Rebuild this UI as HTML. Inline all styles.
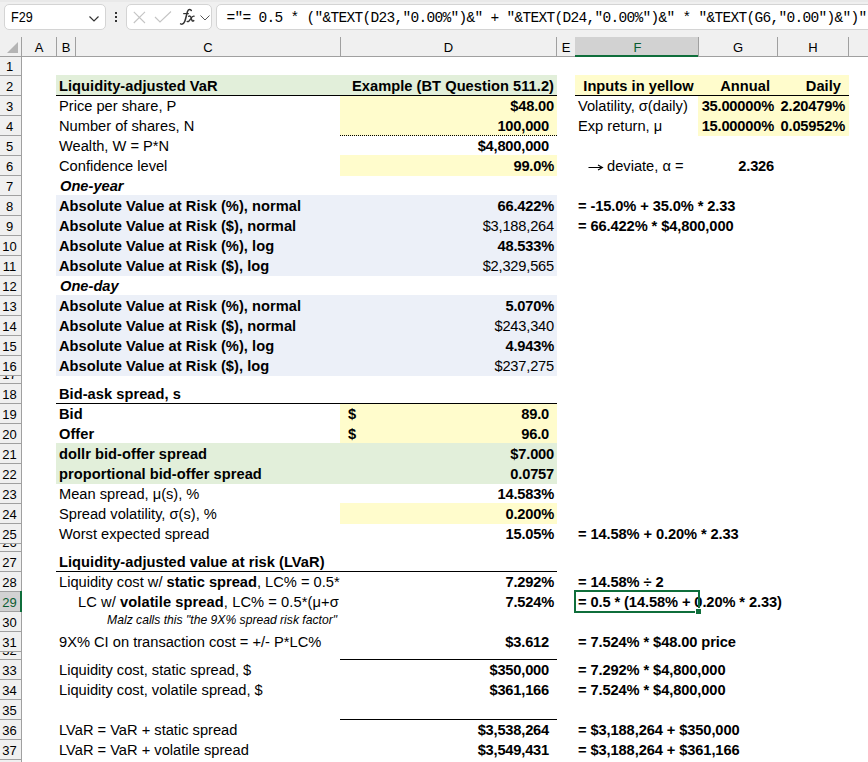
<!DOCTYPE html>
<html><head><meta charset="utf-8"><style>
*{margin:0;padding:0;box-sizing:border-box}
html,body{width:868px;height:762px;overflow:hidden;background:#fff;position:relative}
body{font-family:"Liberation Sans",sans-serif;}
.f{position:absolute}
.t{position:absolute;height:20px;line-height:20px;font-size:14.67px;white-space:nowrap;color:#000}
.b{font-weight:bold;letter-spacing:0.03px}
.n{letter-spacing:-0.2px}
.fm{letter-spacing:-0.1px}
.ls{letter-spacing:0.08px}
.bi{font-weight:bold;font-style:italic}
.sm{font-style:italic;font-size:12.15px}
#tb{position:absolute;left:0;top:0;width:868px;height:37px;background:#f0f0f0}
.box{position:absolute;top:4px;height:26px;background:#fff;border:1px solid #d4d4d4;border-radius:5px}
.ch{position:absolute;top:38px;height:18px;line-height:19px;text-align:center;font-size:13px;color:#000;background:#f0f0f0}
.rh{position:absolute;left:0;width:21px;overflow:hidden;background:#f0f0f0;font-size:13px;color:#000}
.rh.sel{background:#d2d2d2;color:#0b5c30}
</style></head><body>
<div id="tb">
 <div style="position:absolute;left:0;top:0;width:868px;height:2px;background:#e9e9e9"></div>
 <div class="box" style="left:4px;width:102px"><span style="position:absolute;left:6px;top:0;line-height:25px;font-size:14.5px;color:#000;transform:scaleX(0.87);transform-origin:0 0">F29</span>
  <svg style="position:absolute;left:84px;top:11px" width="10" height="6" viewBox="0 0 10 6"><path d="M0.5 0.5 L5 5 L9.5 0.5" fill="none" stroke="#333" stroke-width="1.2"/></svg></div>
 <div style="position:absolute;left:115px;top:12px;width:2px;height:2px;background:#333"></div>
 <div style="position:absolute;left:115px;top:16px;width:2px;height:2px;background:#333"></div>
 <div style="position:absolute;left:115px;top:20px;width:2px;height:2px;background:#333"></div>
 <div class="box" style="left:126px;width:86px">
  <svg style="position:absolute;left:6px;top:6px" width="14" height="14" viewBox="0 0 14 14"><path d="M0.8 0.8 L12 12 M12 0.8 L0.8 12" stroke="#c4c4c4" stroke-width="1.1"/></svg>
  <svg style="position:absolute;left:27px;top:5px" width="18" height="14" viewBox="0 0 18 14"><path d="M1 7 L6 12 L17 1.5" fill="none" stroke="#c4c4c4" stroke-width="1.1"/></svg>
  <svg style="position:absolute;left:49px;top:1px" width="24" height="22" viewBox="0 0 24 22"><path d="M15.3 4.6 C14.8 3.2 12.6 2.9 11.6 5.2 C10.8 7.2 9.9 12.5 8.7 15.6 C7.9 17.6 6.4 18.6 4.6 17.9" fill="none" stroke="#333" stroke-width="1.5" stroke-linecap="round"/><path d="M7.2 7.6 L12.8 7.6" stroke="#333" stroke-width="1.2"/><path d="M12.6 10.3 C14.2 9.6 14.9 10.6 15.3 12.4 C15.8 14.6 16.3 15.8 17.8 14.6 M18 10.2 C17.2 9.8 16.3 10.4 14.6 12.8 C13.2 14.9 12.4 16.2 11.2 15.4" fill="none" stroke="#333" stroke-width="1.4" stroke-linecap="round"/></svg>
  <svg style="position:absolute;left:73px;top:10px" width="10" height="6" viewBox="0 0 10 6"><path d="M0.5 0.5 L5 5 L9.5 0.5" fill="none" stroke="#555" stroke-width="1"/></svg>
 </div>
 <div class="box" style="left:216px;width:700px"><span style="position:absolute;left:9.5px;top:1px;line-height:24px;font-family:'Liberation Mono',monospace;font-size:14.5px;letter-spacing:-0.7px;color:#000;white-space:nowrap">="= 0.5 * ("&amp;TEXT(D23,"0.00%")&amp;" + "&amp;TEXT(D24,"0.00%")&amp;" * "&amp;TEXT(G6,"0.00")&amp;")"</span></div>
</div>
<div class="f" style="left:0;top:37px;width:868px;height:19px;background:#f0f0f0"></div>
<svg class="f" style="left:0;top:37px" width="21" height="19"><path d="M7 16 L18 16 L18 5 Z" fill="#b4b4b4"/></svg>
<div class="ch" style="left:22px;width:34px;">A</div><div class="f" style="left:56px;top:37px;width:1px;height:19px;background:#a0a0a0"></div><div class="ch" style="left:57px;width:18px;">B</div><div class="f" style="left:75px;top:37px;width:1px;height:19px;background:#a0a0a0"></div><div class="ch" style="left:76px;width:264px;">C</div><div class="f" style="left:340px;top:37px;width:1px;height:19px;background:#a0a0a0"></div><div class="ch" style="left:341px;width:215px;">D</div><div class="f" style="left:556px;top:37px;width:1px;height:19px;background:#a0a0a0"></div><div class="ch" style="left:557px;width:18px;">E</div><div class="f" style="left:575px;top:37px;width:1px;height:19px;background:#a0a0a0"></div><div class="ch" style="left:576px;width:122px;background:#d2d2d2;">F</div><div class="f" style="left:698px;top:37px;width:1px;height:19px;background:#a0a0a0"></div><div class="ch" style="left:699px;width:78px;">G</div><div class="f" style="left:777px;top:37px;width:1px;height:19px;background:#a0a0a0"></div><div class="ch" style="left:778px;width:70px;">H</div><div class="f" style="left:848px;top:37px;width:1px;height:19px;background:#a0a0a0"></div><div class="f" style="left:575px;top:37px;width:123px;height:19px;background:#d2d2d2;text-align:center;line-height:21px;font-size:13px;color:#0b5c30;padding-left:2px">F</div>
<div class="f" style="left:0;top:56px;width:868px;height:1px;background:#a0a0a0"></div>
<div class="f" style="left:575px;top:55px;width:123px;height:2px;background:#0f6e3b"></div>
<div class="f" style="left:21px;top:37px;width:1px;height:725px;background:#a0a0a0"></div>
<div class="rh" style="top:57px;height:18px"><span style="position:absolute;left:0px;width:19px;bottom:0px;height:20px;line-height:20px;padding-top:2px;text-align:center">1</span></div><div class="f" style="left:0;top:75px;width:21px;height:1px;background:#a0a0a0"></div><div class="rh" style="top:76px;height:19px"><span style="position:absolute;left:0px;width:19px;bottom:0px;height:20px;line-height:20px;padding-top:2px;text-align:center">2</span></div><div class="f" style="left:0;top:95px;width:21px;height:1px;background:#a0a0a0"></div><div class="rh" style="top:96px;height:19px"><span style="position:absolute;left:0px;width:19px;bottom:0px;height:20px;line-height:20px;padding-top:2px;text-align:center">3</span></div><div class="f" style="left:0;top:115px;width:21px;height:1px;background:#a0a0a0"></div><div class="rh" style="top:116px;height:19px"><span style="position:absolute;left:0px;width:19px;bottom:0px;height:20px;line-height:20px;padding-top:2px;text-align:center">4</span></div><div class="f" style="left:0;top:135px;width:21px;height:1px;background:#a0a0a0"></div><div class="rh" style="top:136px;height:19px"><span style="position:absolute;left:0px;width:19px;bottom:0px;height:20px;line-height:20px;padding-top:2px;text-align:center">5</span></div><div class="f" style="left:0;top:155px;width:21px;height:1px;background:#a0a0a0"></div><div class="rh" style="top:156px;height:19px"><span style="position:absolute;left:0px;width:19px;bottom:0px;height:20px;line-height:20px;padding-top:2px;text-align:center">6</span></div><div class="f" style="left:0;top:175px;width:21px;height:1px;background:#a0a0a0"></div><div class="rh" style="top:176px;height:19px"><span style="position:absolute;left:0px;width:19px;bottom:0px;height:20px;line-height:20px;padding-top:2px;text-align:center">7</span></div><div class="f" style="left:0;top:195px;width:21px;height:1px;background:#a0a0a0"></div><div class="rh" style="top:196px;height:19px"><span style="position:absolute;left:0px;width:19px;bottom:0px;height:20px;line-height:20px;padding-top:2px;text-align:center">8</span></div><div class="f" style="left:0;top:215px;width:21px;height:1px;background:#a0a0a0"></div><div class="rh" style="top:216px;height:19px"><span style="position:absolute;left:0px;width:19px;bottom:0px;height:20px;line-height:20px;padding-top:2px;text-align:center">9</span></div><div class="f" style="left:0;top:235px;width:21px;height:1px;background:#a0a0a0"></div><div class="rh" style="top:236px;height:19px"><span style="position:absolute;left:0px;width:19px;bottom:0px;height:20px;line-height:20px;padding-top:2px;text-align:center">10</span></div><div class="f" style="left:0;top:255px;width:21px;height:1px;background:#a0a0a0"></div><div class="rh" style="top:256px;height:19px"><span style="position:absolute;left:0px;width:19px;bottom:0px;height:20px;line-height:20px;padding-top:2px;text-align:center">11</span></div><div class="f" style="left:0;top:275px;width:21px;height:1px;background:#a0a0a0"></div><div class="rh" style="top:276px;height:19px"><span style="position:absolute;left:0px;width:19px;bottom:0px;height:20px;line-height:20px;padding-top:2px;text-align:center">12</span></div><div class="f" style="left:0;top:295px;width:21px;height:1px;background:#a0a0a0"></div><div class="rh" style="top:296px;height:19px"><span style="position:absolute;left:0px;width:19px;bottom:0px;height:20px;line-height:20px;padding-top:2px;text-align:center">13</span></div><div class="f" style="left:0;top:315px;width:21px;height:1px;background:#a0a0a0"></div><div class="rh" style="top:316px;height:19px"><span style="position:absolute;left:0px;width:19px;bottom:0px;height:20px;line-height:20px;padding-top:2px;text-align:center">14</span></div><div class="f" style="left:0;top:335px;width:21px;height:1px;background:#a0a0a0"></div><div class="rh" style="top:336px;height:19px"><span style="position:absolute;left:0px;width:19px;bottom:0px;height:20px;line-height:20px;padding-top:2px;text-align:center">15</span></div><div class="f" style="left:0;top:355px;width:21px;height:1px;background:#a0a0a0"></div><div class="rh" style="top:356px;height:19px"><span style="position:absolute;left:0px;width:19px;bottom:0px;height:20px;line-height:20px;padding-top:2px;text-align:center">16</span></div><div class="f" style="left:0;top:375px;width:21px;height:1px;background:#a0a0a0"></div><div class="rh" style="top:376px;height:7px"><span style="position:absolute;left:0px;width:19px;bottom:0px;height:20px;line-height:20px;padding-top:2px;text-align:center">17</span></div><div class="f" style="left:0;top:383px;width:21px;height:1px;background:#a0a0a0"></div><div class="rh" style="top:384px;height:19px"><span style="position:absolute;left:0px;width:19px;bottom:0px;height:20px;line-height:20px;padding-top:2px;text-align:center">18</span></div><div class="f" style="left:0;top:403px;width:21px;height:1px;background:#a0a0a0"></div><div class="rh" style="top:404px;height:19px"><span style="position:absolute;left:0px;width:19px;bottom:0px;height:20px;line-height:20px;padding-top:2px;text-align:center">19</span></div><div class="f" style="left:0;top:423px;width:21px;height:1px;background:#a0a0a0"></div><div class="rh" style="top:424px;height:19px"><span style="position:absolute;left:0px;width:19px;bottom:0px;height:20px;line-height:20px;padding-top:2px;text-align:center">20</span></div><div class="f" style="left:0;top:443px;width:21px;height:1px;background:#a0a0a0"></div><div class="rh" style="top:444px;height:19px"><span style="position:absolute;left:0px;width:19px;bottom:0px;height:20px;line-height:20px;padding-top:2px;text-align:center">21</span></div><div class="f" style="left:0;top:463px;width:21px;height:1px;background:#a0a0a0"></div><div class="rh" style="top:464px;height:19px"><span style="position:absolute;left:0px;width:19px;bottom:0px;height:20px;line-height:20px;padding-top:2px;text-align:center">22</span></div><div class="f" style="left:0;top:483px;width:21px;height:1px;background:#a0a0a0"></div><div class="rh" style="top:484px;height:19px"><span style="position:absolute;left:0px;width:19px;bottom:0px;height:20px;line-height:20px;padding-top:2px;text-align:center">23</span></div><div class="f" style="left:0;top:503px;width:21px;height:1px;background:#a0a0a0"></div><div class="rh" style="top:504px;height:19px"><span style="position:absolute;left:0px;width:19px;bottom:0px;height:20px;line-height:20px;padding-top:2px;text-align:center">24</span></div><div class="f" style="left:0;top:523px;width:21px;height:1px;background:#a0a0a0"></div><div class="rh" style="top:524px;height:19px"><span style="position:absolute;left:0px;width:19px;bottom:0px;height:20px;line-height:20px;padding-top:2px;text-align:center">25</span></div><div class="f" style="left:0;top:543px;width:21px;height:1px;background:#a0a0a0"></div><div class="rh" style="top:544px;height:7px"><span style="position:absolute;left:0px;width:19px;bottom:0px;height:20px;line-height:20px;padding-top:2px;text-align:center">26</span></div><div class="f" style="left:0;top:551px;width:21px;height:1px;background:#a0a0a0"></div><div class="rh" style="top:552px;height:19px"><span style="position:absolute;left:0px;width:19px;bottom:0px;height:20px;line-height:20px;padding-top:2px;text-align:center">27</span></div><div class="f" style="left:0;top:571px;width:21px;height:1px;background:#a0a0a0"></div><div class="rh" style="top:572px;height:19px"><span style="position:absolute;left:0px;width:19px;bottom:0px;height:20px;line-height:20px;padding-top:2px;text-align:center">28</span></div><div class="f" style="left:0;top:591px;width:21px;height:1px;background:#a0a0a0"></div><div class="rh sel" style="top:592px;height:19px"><span style="position:absolute;left:0px;width:19px;bottom:0px;height:20px;line-height:20px;padding-top:2px;text-align:center">29</span></div><div class="f" style="left:0;top:611px;width:21px;height:1px;background:#a0a0a0"></div><div class="rh" style="top:612px;height:19px"><span style="position:absolute;left:0px;width:19px;bottom:0px;height:20px;line-height:20px;padding-top:2px;text-align:center">30</span></div><div class="f" style="left:0;top:631px;width:21px;height:1px;background:#a0a0a0"></div><div class="rh" style="top:632px;height:19px"><span style="position:absolute;left:0px;width:19px;bottom:0px;height:20px;line-height:20px;padding-top:2px;text-align:center">31</span></div><div class="f" style="left:0;top:651px;width:21px;height:1px;background:#a0a0a0"></div><div class="rh" style="top:652px;height:7px"><span style="position:absolute;left:0px;width:19px;bottom:0px;height:20px;line-height:20px;padding-top:2px;text-align:center">32</span></div><div class="f" style="left:0;top:659px;width:21px;height:1px;background:#a0a0a0"></div><div class="rh" style="top:660px;height:19px"><span style="position:absolute;left:0px;width:19px;bottom:0px;height:20px;line-height:20px;padding-top:2px;text-align:center">33</span></div><div class="f" style="left:0;top:679px;width:21px;height:1px;background:#a0a0a0"></div><div class="rh" style="top:680px;height:19px"><span style="position:absolute;left:0px;width:19px;bottom:0px;height:20px;line-height:20px;padding-top:2px;text-align:center">34</span></div><div class="f" style="left:0;top:699px;width:21px;height:1px;background:#a0a0a0"></div><div class="rh" style="top:700px;height:19px"><span style="position:absolute;left:0px;width:19px;bottom:0px;height:20px;line-height:20px;padding-top:2px;text-align:center">35</span></div><div class="f" style="left:0;top:719px;width:21px;height:1px;background:#a0a0a0"></div><div class="rh" style="top:720px;height:19px"><span style="position:absolute;left:0px;width:19px;bottom:0px;height:20px;line-height:20px;padding-top:2px;text-align:center">36</span></div><div class="f" style="left:0;top:739px;width:21px;height:1px;background:#a0a0a0"></div><div class="rh" style="top:740px;height:19px"><span style="position:absolute;left:0px;width:19px;bottom:0px;height:20px;line-height:20px;padding-top:2px;text-align:center">37</span></div><div class="f" style="left:0;top:759px;width:21px;height:1px;background:#a0a0a0"></div><div class="rh" style="top:760px;height:19px"><span style="position:absolute;left:0px;width:19px;bottom:0px;height:20px;line-height:20px;padding-top:2px;text-align:center">38</span></div><div class="f" style="left:0;top:779px;width:21px;height:1px;background:#a0a0a0"></div>
<div class="f" style="left:20px;top:591px;width:2px;height:21px;background:#0f6e3b"></div>
<div class="f" style="left:56px;top:75px;width:501px;height:21px;background:#e2efda"></div><div class="f" style="left:575px;top:75px;width:274px;height:21px;background:#fffccc"></div><div class="f" style="left:340px;top:95px;width:217px;height:41px;background:#fffccc"></div><div class="f" style="left:698px;top:95px;width:151px;height:41px;background:#fffccc"></div><div class="f" style="left:340px;top:155px;width:217px;height:21px;background:#fffccc"></div><div class="f" style="left:56px;top:195px;width:501px;height:81px;background:#ecf0f8"></div><div class="f" style="left:56px;top:295px;width:501px;height:81px;background:#ecf0f8"></div><div class="f" style="left:340px;top:403px;width:217px;height:41px;background:#fffccc"></div><div class="f" style="left:56px;top:443px;width:501px;height:41px;background:#e2efda"></div><div class="f" style="left:340px;top:503px;width:217px;height:21px;background:#fffccc"></div><div class="f" style="left:56px;top:95px;width:501px;height:1px;background:#000"></div><div class="f" style="left:575px;top:95px;width:274px;height:1px;background:#000"></div><div class="f" style="left:340px;top:135px;width:217px;height:0;border-top:1px dotted #000"></div><div class="f" style="left:56px;top:403px;width:501px;height:1px;background:#000"></div><div class="f" style="left:56px;top:571px;width:501px;height:1px;background:#000"></div><div class="f" style="left:340px;top:659px;width:217px;height:1px;background:#000"></div><div class="f" style="left:340px;top:719px;width:217px;height:1px;background:#000"></div><div class="t b" style="top:76px;left:59px;">Liquidity-adjusted VaR</div><div class="t b" style="top:76px;right:314px;">Example (BT Question 511.2)</div><div class="t b" style="top:76px;left:488.5px;width:300px;text-align:center;">Inputs in yellow</div><div class="t b" style="top:76px;right:98px;">Annual</div><div class="t b" style="top:76px;right:27px;">Daily</div><div class="t " style="top:96px;left:59px;">Price per share, P</div><div class="t b n" style="top:96px;right:314px;">$48.00</div><div class="t " style="top:96px;left:578px;">Volatility, σ(daily)</div><div class="t b n" style="top:96px;right:94px;">35.00000%</div><div class="t b n" style="top:96px;right:23px;">2.20479%</div><div class="t " style="top:116px;left:59px;">Number of shares, N</div><div class="t b n" style="top:116px;right:319px;">100,000</div><div class="t " style="top:116px;left:578px;">Exp return, μ</div><div class="t b n" style="top:116px;right:94px;">15.00000%</div><div class="t b n" style="top:116px;right:23px;">0.05952%</div><div class="t " style="top:136px;left:59px;">Wealth, W = P*N</div><div class="t b n" style="top:136px;right:319px;">$4,800,000</div><div class="t " style="top:156px;left:59px;">Confidence level</div><div class="t b n" style="top:156px;right:314px;">99.0%</div><div class="t " style="top:156px;left:607px;">deviate, α =</div><svg class="f" style="left:586px;top:160px" width="20" height="14"><path d="M2.5 7.5 L16.5 7.5 M12 5 L16.5 7.5 L12 10" fill="none" stroke="#000" stroke-width="1.1"/></svg><div class="t b n" style="top:156px;right:94px;">2.326</div><div class="t bi" style="top:176px;left:60px;">One-year</div><div class="t b" style="top:196px;left:59px;">Absolute Value at Risk (%), normal</div><div class="t b n" style="top:196px;right:314px;">66.422%</div><div class="t b" style="top:216px;left:59px;">Absolute Value at Risk ($), normal</div><div class="t n" style="top:216px;right:314px;">$3,188,264</div><div class="t b" style="top:236px;left:59px;">Absolute Value at Risk (%), log</div><div class="t b n" style="top:236px;right:314px;">48.533%</div><div class="t b" style="top:256px;left:59px;">Absolute Value at Risk ($), log</div><div class="t n" style="top:256px;right:314px;">$2,329,565</div><div class="t b fm" style="top:196px;left:578px;">= -15.0% + 35.0% * 2.33</div><div class="t b fm" style="top:216px;left:578px;">= 66.422% * $4,800,000</div><div class="t bi" style="top:276px;left:60px;">One-day</div><div class="t b" style="top:296px;left:59px;">Absolute Value at Risk (%), normal</div><div class="t b n" style="top:296px;right:314px;">5.070%</div><div class="t b" style="top:316px;left:59px;">Absolute Value at Risk ($), normal</div><div class="t n" style="top:316px;right:314px;">$243,340</div><div class="t b" style="top:336px;left:59px;">Absolute Value at Risk (%), log</div><div class="t b n" style="top:336px;right:314px;">4.943%</div><div class="t b" style="top:356px;left:59px;">Absolute Value at Risk ($), log</div><div class="t n" style="top:356px;right:314px;">$237,275</div><div class="t b" style="top:384px;left:59px;">Bid-ask spread, s</div><div class="t b" style="top:404px;left:59px;">Bid</div><div class="t b" style="top:404px;left:348px;">$</div><div class="t b n" style="top:404px;right:319px;">89.0</div><div class="t b" style="top:424px;left:59px;">Offer</div><div class="t b" style="top:424px;left:348px;">$</div><div class="t b n" style="top:424px;right:319px;">96.0</div><div class="t b" style="top:444px;left:59px;">dollr bid-offer spread</div><div class="t b n" style="top:444px;right:314px;">$7.000</div><div class="t b" style="top:464px;left:59px;">proportional bid-offer spread</div><div class="t b n" style="top:464px;right:314px;">0.0757</div><div class="t " style="top:484px;left:59px;">Mean spread, μ(s), %</div><div class="t b n" style="top:484px;right:314px;">14.583%</div><div class="t " style="top:504px;left:59px;">Spread volatility, σ(s), %</div><div class="t b n" style="top:504px;right:314px;">0.200%</div><div class="t " style="top:524px;left:59px;">Worst expected spread</div><div class="t b n" style="top:524px;right:314px;">15.05%</div><div class="t b fm" style="top:524px;left:578px;">= 14.58% + 0.20% * 2.33</div><div class="t b" style="top:552px;left:59px;">Liquidity-adjusted value at risk (LVaR)</div><div class="t " style="top:572px;left:59px;width:281px;overflow:hidden;">Liquidity cost w/ <b>static spread</b>, LC% = 0.5*spread</div><div class="t b n" style="top:572px;right:314px;">7.292%</div><div class="t b fm" style="top:572px;left:578px;">= 14.58% ÷ 2</div><div class="t ls" style="top:592px;left:78px;width:261px;overflow:hidden;">LC w/ <b>volatile spread</b>, LC% = 0.5*(μ+σ*α)</div><div class="t b n" style="top:592px;right:314px;">7.524%</div><div class="t b fm" style="top:592px;left:578px;">= 0.5 * (14.58% + 0.20% * 2.33)</div><div class="t sm" style="top:609.5px;right:531px;">Malz calls this "the 9X% spread risk factor"</div><div class="t " style="top:632px;left:59px;">9X% CI on transaction cost = +/- P*LC%</div><div class="t b n" style="top:632px;right:319px;">$3.612</div><div class="t b fm" style="top:632px;left:578px;">= 7.524% * $48.00 price</div><div class="t " style="top:660px;left:59px;">Liquidity cost, static spread, $</div><div class="t b n" style="top:660px;right:319px;">$350,000</div><div class="t b fm" style="top:660px;left:578px;">= 7.292% * $4,800,000</div><div class="t " style="top:680px;left:59px;">Liquidity cost, volatile spread, $</div><div class="t b n" style="top:680px;right:319px;">$361,166</div><div class="t b fm" style="top:680px;left:578px;">= 7.524% * $4,800,000</div><div class="t " style="top:720px;left:59px;">LVaR = VaR + static spread</div><div class="t b n" style="top:720px;right:319px;">$3,538,264</div><div class="t b fm" style="top:720px;left:578px;">= $3,188,264 + $350,000</div><div class="t " style="top:740px;left:59px;">LVaR = VaR + volatile spread</div><div class="t b n" style="top:740px;right:319px;">$3,549,431</div><div class="t b fm" style="top:740px;left:578px;">= $3,188,264 + $361,166</div>
<div class="f" style="left:574px;top:590px;width:126px;height:23px;border:2px solid #0f6e3b"></div>
<div class="f" style="left:695px;top:608px;width:7px;height:7px;background:#fff"></div><div class="f" style="left:696px;top:609px;width:5px;height:5px;background:#0f6e3b"></div>
</body></html>
